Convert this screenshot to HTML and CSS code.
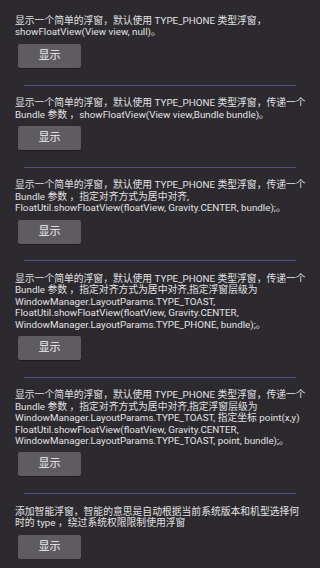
FILE: index.html
```html
<!DOCTYPE html>
<html lang="zh">
<head>
<meta charset="utf-8">
<title>FloatView</title>
<link rel="stylesheet" href="styles.css">
</head>
<body>
<main class="list">
  <section class="item">
    <p class="desc">显示一个简单的浮窗，默认使用 TYPE_PHONE 类型浮窗，<br>showFloatView(View view, null)。</p>
    <button class="btn">显示</button>
  </section>
  <hr class="divider">
  <section class="item">
    <p class="desc">显示一个简单的浮窗，默认使用 TYPE_PHONE 类型浮窗，传递一个<br>Bundle 参数 ，showFloatView(View view,Bundle bundle)。</p>
    <button class="btn">显示</button>
  </section>
  <hr class="divider">
  <section class="item">
    <p class="desc">显示一个简单的浮窗，默认使用 TYPE_PHONE 类型浮窗，传递一个<br>Bundle 参数 ，指定对齐方式为居中对齐,<br>FloatUtil.showFloatView(floatView, Gravity.CENTER, bundle);。</p>
    <button class="btn">显示</button>
  </section>
  <hr class="divider">
  <section class="item">
    <p class="desc">显示一个简单的浮窗，默认使用 TYPE_PHONE 类型浮窗，传递一个<br>Bundle 参数 ，指定对齐方式为居中对齐,指定浮窗层级为<br>WindowManager.LayoutParams.TYPE_TOAST,<br>FloatUtil.showFloatView(floatView, Gravity.CENTER,<br>WindowManager.LayoutParams.TYPE_PHONE, bundle);。</p>
    <button class="btn">显示</button>
  </section>
  <hr class="divider">
  <section class="item">
    <p class="desc">显示一个简单的浮窗，默认使用 TYPE_PHONE 类型浮窗，传递一个<br>Bundle 参数 ，指定对齐方式为居中对齐,指定浮窗层级为<br>WindowManager.LayoutParams.TYPE_TOAST, 指定坐标 point(x,y)<br>FloatUtil.showFloatView(floatView, Gravity.CENTER,<br>WindowManager.LayoutParams.TYPE_TOAST, point, bundle);。</p>
    <button class="btn">显示</button>
  </section>
  <hr class="divider">
  <section class="item">
    <p class="desc">添加智能浮窗，智能的意思是自动根据当前系统版本和机型选择何<br>时的 type ，绕过系统权限限制使用浮窗</p>
    <button class="btn">显示</button>
  </section>
</main>
</body>
</html>
```

FILE: styles.css
```css
html, body {
  margin: 0;
  padding: 0;
  background: #2c2a2e;
}

body {
  font-family: Roboto, "Noto Sans CJK SC", sans-serif;
  color: #e2e1e3;
  overflow: hidden;
}

.list {
  display: flex;
  flex-direction: column;
  padding: 15px 15px 0 15px;
}

.item {
  display: flex;
  flex-direction: column;
  align-items: flex-start;
}

.desc {
  margin: 0;
  font-size: 9.8px;
  line-height: 11.4px;
  white-space: nowrap;
}

.btn {
  margin: 6px 0 0 3px;
  width: 63px;
  height: 24px;
  padding: 0;
  border: none;
  border-radius: 2px;
  background: #5e5c60;
  color: #f2f1f3;
  font-family: Roboto, "Noto Sans CJK SC", sans-serif;
  font-size: 11px;
  line-height: 24px;
  box-shadow: 0 1px 1px rgba(0, 0, 0, 0.35);
}

.divider {
  margin: 16.7px 9px 11.7px 9px;
  height: 1px;
  border: none;
  background: #52508a;
}
```
